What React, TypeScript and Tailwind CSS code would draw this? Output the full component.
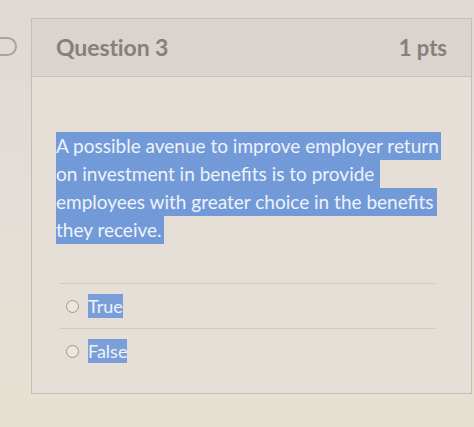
export default function App() {
  const lines = [
    { text: "A possible avenue to improve employer return", pad: "pr-[2px]" },
    { text: "on investment in benefits is to provide", pad: "pr-[6px]" },
    { text: "employees with greater choice in the benefits", pad: "pr-[3px]" },
    { text: "they receive.", pad: "pr-[2px]" },
  ];

  return (
    <div
      className="relative w-[474px] h-[427px] overflow-hidden bg-gradient-to-b from-[#dfd8d4] via-[#e4ded8] to-[#e6e1cf] pt-[18px]"
      style={{ fontFamily: "Lato, 'Open Sans', sans-serif" }}
    >
      {/* flag marker, clipped at the left edge */}
      <div className="absolute left-[-14px] top-[37px] w-[31px] h-[19px] rounded-r-full border-2 border-[#a9a4a0]" />

      <div className="ml-[31px] w-[441px] h-[376px] border border-[#c4bdb7] bg-[#e5dfd8]">
        <div className="h-[58px] flex items-center justify-between px-[24px] bg-[#dad3ce] border-b border-[#c9c2bc]">
          <span className="text-[23px] font-bold text-[#85807c] tracking-[-0.1px]">Question 3</span>
          <span className="text-[22px] font-bold text-[#85807c]">1 pts</span>
        </div>

        <div className="px-[24px] pt-[55px]">
          <div className="flex flex-col items-start">
            {lines.map((l) => (
              <div
                key={l.text}
                className={`${l.pad} h-[28px] bg-[#729ad9] text-[#eef2fa] text-[19px] leading-[28px] whitespace-nowrap`}
              >
                {l.text}
              </div>
            ))}
          </div>

          <div className="mt-[39px] ml-[4px] mr-[12px]">
            {["True", "False"].map((a) => (
              <div key={a} className="border-t border-[#cfc9c0] h-[45px] flex items-center gap-[9px] pl-[6px]">
                <span className="w-[13px] h-[13px] rounded-full border-[1.5px] border-[#9c9792] bg-[#ebe7df]" />
                <span className="bg-[#7a9fd8] text-[#eef2fa] text-[18px] leading-[24px]">{a}</span>
              </div>
            ))}
          </div>
        </div>
      </div>
    </div>
  );
}
